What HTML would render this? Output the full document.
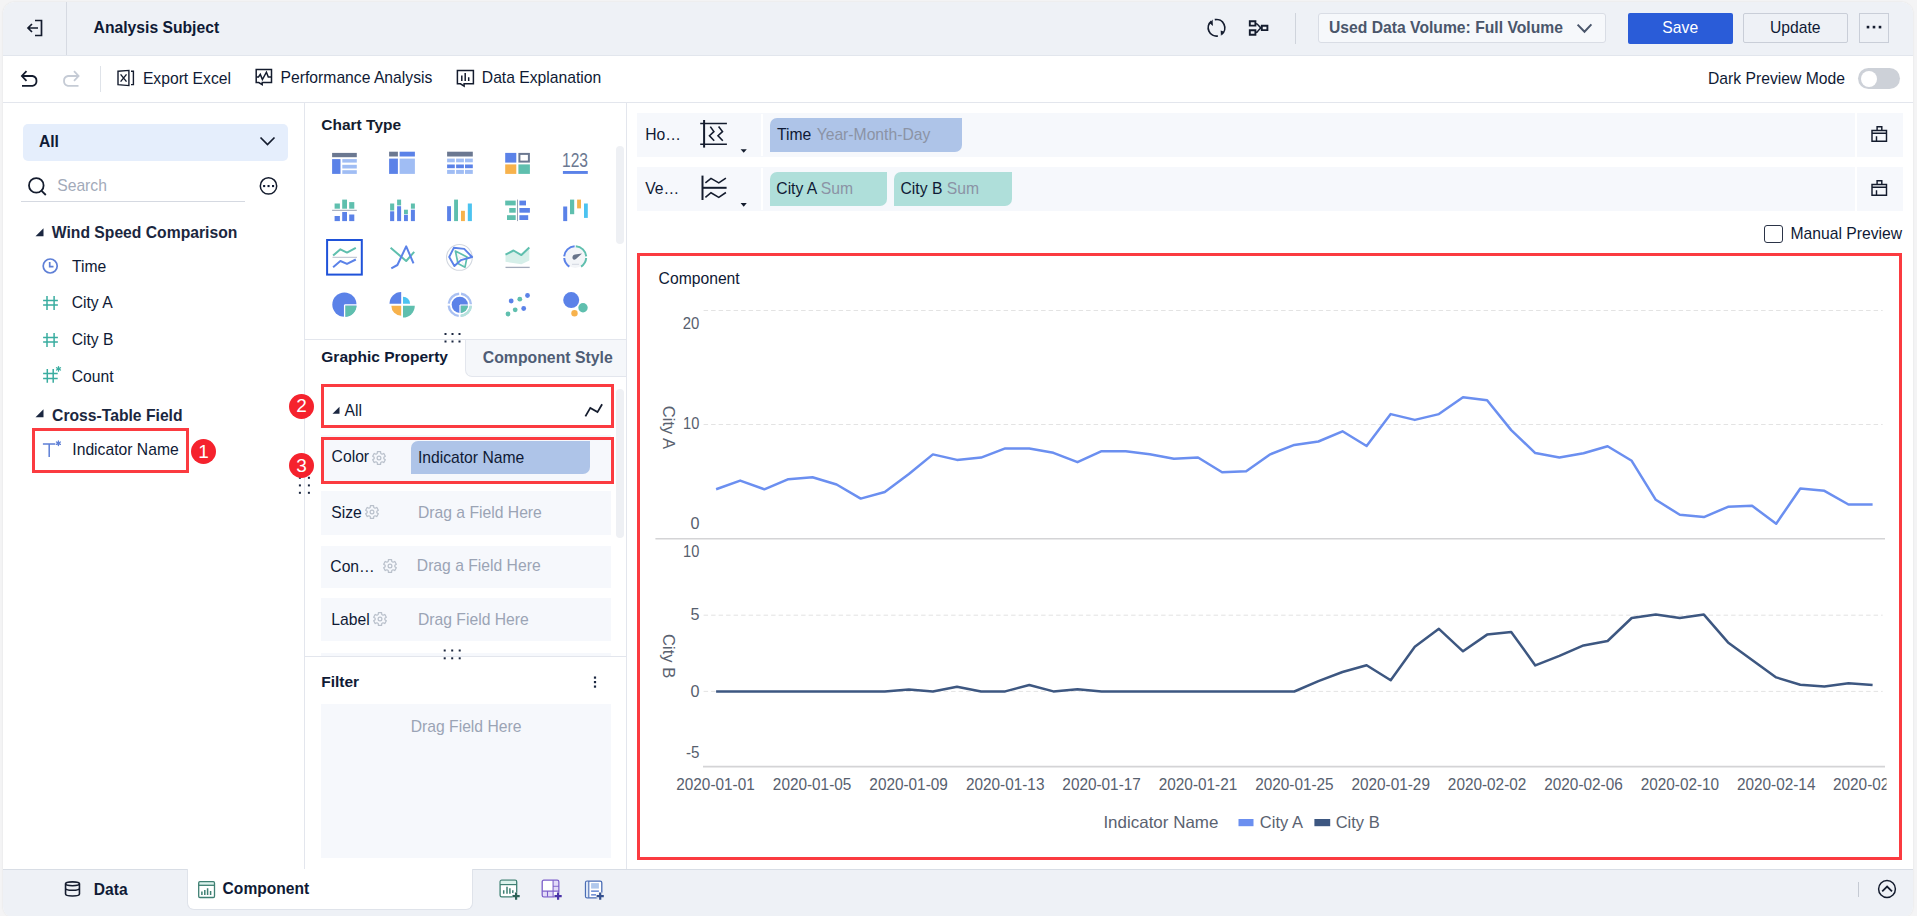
<!DOCTYPE html>
<html><head><meta charset="utf-8">
<style>
*{box-sizing:border-box;margin:0;padding:0}
html,body{width:1917px;height:916px;overflow:hidden;background:#f4f4f5;font-family:"Liberation Sans",sans-serif;color:#0f1a35;font-size:15.7px}
.a{position:absolute}
.t{position:absolute;white-space:nowrap;line-height:1}
.b{font-weight:700}
svg{position:absolute;overflow:visible}
.ic{fill:none;stroke:#141c2e}
</style></head><body>
<div class="a" style="left:2.5px;top:1.5px;width:1910.5px;height:916.5px;background:#fff;border-radius:12px;box-shadow:0 0 2px rgba(0,0,0,.10)"></div>
<!--HEADER-->
<div class="a" style="left:2.5px;top:1.5px;width:1910.5px;height:54px;background:#eef1f6;border-radius:12px 12px 0 0;border-bottom:1px solid #e2e6ed"></div>
<div class="a" style="left:66px;top:2px;width:1px;height:53px;background:#d6dae2"></div>
<svg style="left:0;top:0" width="60" height="60"><g class="ic" stroke-width="1.7"><path d="M35 20.5h6.5v15H35"/><path d="M38 28H28M32 24l-4 4 4 4"/></g></svg>
<div class="t b" style="left:93.6px;top:20.2px;font-size:15.7px">Analysis Subject</div>
<svg style="left:1200px;top:12px" width="100" height="34"><g class="ic" stroke-width="1.7"><path d="M14.77 7.68A8.3 8.3 0 0 1 21.61 22.34 M17.94 23.97A8.3 8.3 0 0 1 11.39 9.26"/>
<path d="M49.8 9.2h5.6v4.4h-5.6zM49.8 18.3h5.6v4.4h-5.6zM61.8 13.7h5.6v4.4h-5.6z" stroke-width="1.9"/><path d="M55.4 11.4c4 0 2.6 4.5 6.4 4.5M55.4 20.5c4 0 2.6-4.6 6.4-4.6" stroke-width="1.5"/></g>
<path d="M12.6 7.6l.3 6.3-3.2-2.6z" fill="#141c2e"/><path d="M20.7 18.4l.2 5.6 2.6-4.5z" fill="#141c2e"/></svg>
<div class="a" style="left:1295px;top:13px;width:1px;height:31px;background:#cfd4dc"></div>
<div class="a" style="left:1317.8px;top:13.3px;width:288.7px;height:30.2px;background:#f6f8fb;border:1px solid #d9dde5;border-radius:3px"></div>
<div class="t b" style="left:1329px;top:20.3px;font-size:15.7px;color:#4a566b">Used Data Volume: Full Volume</div>
<svg style="left:1570px;top:18px" width="30" height="20"><path class="ic" style="stroke:#4a566b" stroke-width="2" d="M7.6 6.6L14.5 13.7 21.4 6.4"/></svg>
<div class="a" style="left:1628px;top:13px;width:104.5px;height:30.6px;background:#2a5cd8;border-radius:2px"></div>
<div class="t" style="left:1628px;top:19.6px;width:104.5px;text-align:center;color:#fff;font-size:15.7px">Save</div>
<div class="a" style="left:1743px;top:13.3px;width:104.6px;height:30.2px;border:1px solid #c9ced8;border-radius:2px"></div>
<div class="t" style="left:1743px;top:19.6px;width:104.6px;text-align:center;font-size:15.7px">Update</div>
<div class="a" style="left:1859.3px;top:13.2px;width:29.4px;height:30.3px;border:1px solid #c9ced8"></div>
<svg style="left:1859px;top:13px" width="30" height="30"><g fill="#141c2e"><rect x="7.7" y="12.8" width="2.6" height="2.6"/><rect x="13.7" y="12.8" width="2.6" height="2.6"/><rect x="19.7" y="12.8" width="2.6" height="2.6"/></g></svg>
<!--TOOLBAR-->
<div class="a" style="left:2.5px;top:102px;width:1910.5px;height:1px;background:#e3e6ed"></div>
<svg style="left:0;top:60px" width="120" height="40"><g class="ic" stroke-width="1.8">
<path d="M22.5 16h10a5 5 0 0 1 0 9.8H22"/><path d="M26.5 11.2l-4.6 4.8 4.6 4.8"/></g>
<g class="ic" style="stroke:#c5cbd5" stroke-width="1.8"><path d="M78 16H68a5 5 0 0 0 0 9.8h10.5"/><path d="M74 11.2l4.6 4.8-4.6 4.8"/></g></svg>
<div class="a" style="left:99.5px;top:66px;width:1px;height:26px;background:#dfe3e9"></div>
<svg style="left:110px;top:60px" width="30" height="30"><g class="ic" stroke-width="1.4"><path d="M8 11.2L18.9 10.4V25.6L8 24.6z"/><path d="M21 11.2h2.4v13.4H21"/><path d="M10.6 14.4l5.9 7.2M16.5 14.4l-5.9 7.2"/></g></svg>
<div class="t" style="left:142.9px;top:70.7px">Export Excel</div>
<svg style="left:250px;top:60px" width="30" height="30"><g class="ic" stroke-width="1.5" stroke-linejoin="miter"><path d="M6.2 22.5V9.4H21.5V22.5H12.2V24.6L8.8 22.5z"/><path d="M6.5 16.9H8.5L10.3 14.4 12.4 19.5 16.4 12.2 18.3 17.1H21.3"/></g></svg>
<div class="t" style="left:280.6px;top:69.8px">Performance Analysis</div>
<svg style="left:450px;top:60px" width="30" height="30"><g class="ic" stroke-width="1.5" stroke-linejoin="miter"><path d="M7.4 23.8V10.4H23.4V23.8H14.1V26.2L10.5 23.8z"/><path d="M11.8 21V15.4M15.2 21V13.1M18.7 21V17.2"/></g></svg>
<div class="t" style="left:481.8px;top:70.4px">Data Explanation</div>
<div class="t" style="left:1708px;top:70.5px">Dark Preview Mode</div>
<div class="a" style="left:1858px;top:68px;width:42px;height:21px;background:#cdd1d8;border-radius:11px"></div>
<div class="a" style="left:1860.5px;top:70.5px;width:16px;height:16px;background:#fff;border-radius:50%"></div>
<!--LEFT PANEL-->
<div class="a" style="left:304px;top:103px;width:1px;height:766px;background:#e3e6ed"></div>
<div class="a" style="left:23.2px;top:124.1px;width:264.8px;height:36.6px;background:#e5eefc;border-radius:5px"></div>
<div class="t b" style="left:38.9px;top:133.6px;font-size:15.7px">All</div>
<svg style="left:250px;top:130px" width="30" height="20"><path class="ic" stroke-width="1.7" d="M10.5 7.5l7 7 7-7"/></svg>
<svg style="left:20px;top:170px" width="30" height="30"><g class="ic" stroke-width="1.8"><circle cx="16.3" cy="15.4" r="7.3"/><path d="M21.6 20.8l4.2 4.2"/></g></svg>
<div class="t" style="left:57.2px;top:178.3px;color:#a2aab9">Search</div>
<div class="a" style="left:21.2px;top:201px;width:223.6px;height:1px;background:#d5d9e1"></div>
<svg style="left:255px;top:173px" width="30" height="30"><g class="ic" stroke-width="1.5"><circle cx="13.5" cy="12.9" r="8.2"/></g><g fill="#0f1a35"><rect x="8.1" y="12" width="2.1" height="2.1"/><rect x="12.5" y="12" width="2.1" height="2.1"/><rect x="17" y="12" width="2.1" height="2.1"/></g></svg>
<svg style="left:30px;top:225px" width="20" height="15"><path d="M5.5 11.3l8-8v8z" fill="#1b2740"/></svg>
<div class="t b" style="left:51.8px;top:224.8px;font-size:15.7px;color:#1b2740">Wind Speed Comparison</div>
<svg style="left:40px;top:256px" width="22" height="22"><g class="ic" style="stroke:#5e7fd6" stroke-width="1.7"><circle cx="10.2" cy="10" r="7"/><path d="M9.7 6v4.6h3.8"/></g></svg>
<div class="t" style="left:71.9px;top:258.5px">Time</div>
<svg style="left:40px;top:290px" width="22" height="22"><g class="ic" style="stroke:#3aada0" stroke-width="1.5"><path d="M7 5.9v14.1M14.1 5.9v14.1M3.1 10.5h14.8M3.1 15h14.8"/></g></svg>
<div class="t" style="left:71.7px;top:294.8px">City A</div>
<svg style="left:40px;top:327px" width="22" height="22"><g class="ic" style="stroke:#3aada0" stroke-width="1.5"><path d="M7 5.9v14.1M14.1 5.9v14.1M3.1 10.5h14.8M3.1 15h14.8"/></g></svg>
<div class="t" style="left:71.7px;top:331.8px">City B</div>
<svg style="left:40px;top:364px" width="22" height="22"><g class="ic" style="stroke:#3aada0" stroke-width="1.5"><path d="M7.3 5v13.8M13.2 5v13.8M3.1 9.4h14.6M3.1 14.5h14.6"/></g><g stroke="#3aada0" stroke-width="1.3" stroke-linecap="round"><path d="M18.5 2.6000000000000005v4.6M16.5 3.7500000000000004l4 2.3M16.5 6.050000000000001l4-2.3"/></g></svg>
<div class="t" style="left:71.7px;top:368.5px">Count</div>
<svg style="left:30px;top:406px" width="20" height="15"><path d="M5.5 11.3l8-8v8z" fill="#1b2740"/></svg>
<div class="t b" style="left:52.1px;top:407.5px;font-size:15.7px;color:#1b2740">Cross-Table Field</div>
<div class="a" style="left:32.1px;top:428.1px;width:156.7px;height:44.6px;border:3px solid #fb3b40"></div>
<svg style="left:40px;top:438px" width="24" height="24"><g class="ic" style="stroke:#5e7fd6" stroke-width="1.5"><path d="M2.9 6h12.4M9.2 6v13"/></g><g stroke="#5e7fd6" stroke-width="1.3" stroke-linecap="round"><path d="M18.4 2.9000000000000004v4.6M16.4 4.050000000000001l4 2.3M16.4 6.35l4-2.3"/></g></svg>
<div class="t" style="left:72.3px;top:442.2px">Indicator Name</div>
<div class="a" style="left:190.9px;top:438.8px;width:25.2px;height:25.2px;background:#f5222d;border-radius:50%"></div>
<div class="t" style="left:190.9px;top:441.5px;width:25.2px;text-align:center;color:#fff;font-size:19px">1</div>
<!--MIDDLE PANEL-->
<div class="a" style="left:626px;top:103px;width:1px;height:766px;background:#e3e6ed"></div>
<div class="t b" style="left:321.3px;top:117.4px;font-size:15.5px;color:#141c2e">Chart Type</div>
<div class="a" style="left:615.5px;top:146px;width:8.4px;height:98px;background:#eef0f4;border-radius:4px"></div>
<svg style="left:0;top:0" width="627" height="330">
<!--row1-->
<g>
<rect x="332.1" y="152.9" width="24.7" height="4.3" fill="#6b7891"/>
<rect x="332.1" y="159.1" width="8.4" height="14.8" fill="#5b82e8"/>
<rect x="342.3" y="159.1" width="14.5" height="3.5" fill="#a0bdf4"/><rect x="342.3" y="164.8" width="14.5" height="3.7" fill="#a0bdf4"/><rect x="342.3" y="170.2" width="14.5" height="3.7" fill="#a0bdf4"/>
</g>
<g>
<rect x="389.1" y="151.7" width="8.8" height="4.8" fill="#6b7891"/><rect x="399.6" y="151.7" width="15.3" height="4.8" fill="#5b82e8"/>
<rect x="389.1" y="158.6" width="8.8" height="15.3" fill="#5b82e8"/><rect x="399.6" y="158.6" width="15.3" height="15.3" fill="#a0bdf4"/>
</g>
<g>
<rect x="447.1" y="151.7" width="25.7" height="4.8" fill="#6b7891"/>
<g fill="#a0bdf4"><rect x="447.1" y="158.6" width="7.7" height="3.7"/><rect x="456.1" y="158.6" width="7.8" height="3.7"/><rect x="465" y="158.6" width="7.8" height="3.7"/>
<rect x="447.1" y="169.9" width="7.7" height="4"/><rect x="456.1" y="169.9" width="7.8" height="4"/><rect x="465" y="169.9" width="7.8" height="4"/></g>
<g fill="#5b82e8"><rect x="447.1" y="164.5" width="7.7" height="3.7"/><rect x="456.1" y="164.5" width="7.8" height="3.7"/><rect x="465" y="164.5" width="7.8" height="3.7"/></g>
</g>
<g>
<rect x="505.2" y="152.9" width="11.1" height="9.7" fill="#5b82e8"/>
<rect x="519.4" y="153.9" width="9.5" height="7.7" fill="none" stroke="#6b7891" stroke-width="2"/>
<rect x="505.2" y="164.4" width="11.1" height="9.5" fill="#f7b24c"/><rect x="518.4" y="164.4" width="11.5" height="9.5" fill="#5fbfae"/>
</g>
<g>
<text x="562" y="167" font-size="19.5" fill="#6b7891" font-family="Liberation Sans" textLength="26" lengthAdjust="spacingAndGlyphs">123</text>
<rect x="562.9" y="171" width="24.9" height="2.9" fill="#5b82e8"/>
</g>
<!--row2-->
<g>
<rect x="332.1" y="209.8" width="24.7" height="1" fill="#9aa3b3"/>
<g fill="#5fbfae"><rect x="334.6" y="203.5" width="5.3" height="5.2"/><rect x="342.2" y="199.6" width="4.8" height="9.1"/><rect x="349.2" y="202.1" width="5.1" height="6.6"/></g>
<g fill="#5b82e8"><rect x="334.6" y="216" width="5.3" height="5.1"/><rect x="342.2" y="212" width="4.8" height="9.1"/><rect x="349.2" y="214.5" width="5.1" height="6.6"/></g>
</g>
<g>
<g fill="#5fbfae"><rect x="390.1" y="203.5" width="4.1" height="7"/><rect x="397.1" y="199.6" width="4" height="5.8"/><rect x="404" y="209.7" width="3.9" height="4.5"/><rect x="410.9" y="203.5" width="4" height="5.2"/></g>
<g fill="#5b82e8"><rect x="390.1" y="211.3" width="4.1" height="9.8"/><rect x="397.1" y="206.2" width="4" height="14.9"/><rect x="404" y="214.8" width="3.9" height="6.3"/><rect x="410.9" y="209.7" width="4" height="11.4"/></g>
</g>
<g>
<rect x="447.1" y="206.2" width="3.9" height="14.9" fill="#5b82e8"/><rect x="454.1" y="199.6" width="3.9" height="21.5" fill="#5fbfae"/><rect x="461" y="210.8" width="3.9" height="10.3" fill="#f7b24c"/><rect x="467.8" y="203.5" width="4.1" height="17.6" fill="#4cc3f0"/>
</g>
<g>
<rect x="517" y="199.6" width="1" height="21.5" fill="#9aa3b3"/>
<g fill="#5fbfae"><rect x="505.2" y="200.6" width="10.5" height="4.8"/><rect x="509.2" y="208" width="6.5" height="4.7"/><rect x="507" y="215.2" width="8.7" height="4.8"/></g>
<g fill="#5b82e8"><rect x="519.4" y="200.6" width="6.6" height="4.8"/><rect x="519.4" y="208" width="10.5" height="4.7"/><rect x="519.4" y="215.2" width="8.8" height="4.8"/></g>
</g>
<g>
<rect x="563.2" y="206.5" width="4" height="14.6" fill="#5b82e8"/><rect x="570" y="199.6" width="4.2" height="14.6" fill="#5fbfae"/><rect x="577.1" y="199.6" width="3.9" height="8.8" fill="#f7b24c"/><rect x="584" y="203.5" width="3.8" height="14.4" fill="#4cc3f0"/>
</g>
<!--row3-->
<rect x="327.1" y="240" width="34.7" height="34.6" fill="none" stroke="#1f52d9" stroke-width="2"/>
<g fill="none" stroke-width="2" stroke-linejoin="round">
<polyline points="333.1,255.6 340.4,249.3 347,252.6 355.8,247.8" stroke="#5fbfae"/>
<path d="M332.5 257.3h24.5" stroke="#b8bfcc" stroke-width="1"/>
<polyline points="333.1,267.2 340.4,261 347,263.9 355.8,259.5" stroke="#5b82e8"/>
<polyline points="390.6,247.8 406.2,261 414.2,251.9" stroke="#5fbfae"/>
<polyline points="391.3,268.3 397.4,265 406.2,246.4 413.5,263.3" stroke="#5b82e8"/>
<circle cx="459.4" cy="257.4" r="12.9" stroke="#d3d8e0" stroke-width="1.1"/>
<path d="M459.4 257.4L453.8 247.8M459.4 257.4L472 257M459.4 257.4L454.4 266M459.4 257.4L465 267" stroke="#e6e9ee" stroke-width=".8"/>
<polygon points="455.4,251 467,257 465,267.2 458,263.5" stroke="#5fbfae" stroke-width="1.7"/>
<polygon points="453.8,247.8 464.2,248.9 472.1,257 460.9,260.1 454.4,266 449.2,257" stroke="#5b82e8" stroke-width="1.9"/>
<path d="M505.5 254.7L513.5 250.5 521.4 255.1 529.3 247.6V260.5L521.4 264.3 505.5 261.8z" fill="#d6efe9" stroke="none"/>
<polyline points="505.5,254.7 513.5,250.5 521.4,255.1 529.3,247.6" stroke="#5fbfae"/>
<path d="M505.5 267.4h24.2" stroke="#a3abba" stroke-width="1.3"/>
<circle cx="575.2" cy="257.4" r="10.5" fill="#f3f5f8" stroke="none"/>
<path d="M569.37 266.53A11.0 11.0 0 0 1 564.23 257.97 M564.23 256.43A11.0 11.0 0 0 1 574.62 246.22" stroke="#5b82e8" stroke-width="2"/>
<path d="M575.78 246.22A11.0 11.0 0 0 1 586.17 256.43 M586.17 257.97A11.0 11.0 0 0 1 581.03 266.53" stroke="#5fbfae" stroke-width="2"/>
<path d="M572 264.3h7" stroke="#d3d8e0" stroke-width="1"/>
</g>
<path d="M573.5 259.5C571.5 258 572.5 254.8 575 254.5L582 253.5 576.5 258.5C575.8 259.5 574.5 260 573.5 259.5z" fill="#67748a"/>
<!--row4-->
<circle cx="344.4" cy="304.6" r="12.1" fill="#5b82e8"/>
<path d="M345.2 305.4h11.3A11.3 11.3 0 0 1 345.2 316.7z" fill="#5fbfae"/>
<path d="M344.6 304.8h12.6M344.6 304.8v12.6" stroke="#fff" stroke-width="1.3"/>
<path d="M401.2 303.8V292.1A11.7 11.7 0 0 0 389.5 303.8z" fill="#5b82e8"/>
<path d="M403 303.8V296.7A7.1 7.1 0 0 1 410.1 303.8z" fill="#4cc3f0"/>
<path d="M401.2 305.8H391.3A9.9 9.9 0 0 0 401.2 315.7z" fill="#f7b24c"/>
<path d="M403 305.8H414.8A11.8 11.8 0 0 1 403 317.6z" fill="#5fbfae"/>
<circle cx="459.8" cy="304.8" r="11.1" fill="none" stroke="#a9c0f2" stroke-width="2.4" stroke-dasharray="15.43 2" stroke-dashoffset="-1"/>
<path d="M470.9 305.8A11.1 11.1 0 0 1 460.8 315.9" fill="none" stroke="#b5e3da" stroke-width="2.4"/>
<circle cx="459.8" cy="304.8" r="8.1" fill="#5b82e8"/>
<path d="M460.6 305.6h7.3A7.3 7.3 0 0 1 460.6 312.9z" fill="#5fbfae"/>
<path d="M460 305h8.5M460 305v8.5" stroke="#fff" stroke-width="1.2"/>
<g fill="#5b82e8"><circle cx="511.2" cy="301" r="2.4"/><circle cx="527.5" cy="295.5" r="2.4"/><circle cx="523.7" cy="308.5" r="2.4"/></g>
<g fill="#5fbfae"><circle cx="519.8" cy="299.2" r="2.4"/><circle cx="515.2" cy="309.8" r="2.4"/><circle cx="508" cy="314" r="2.4"/></g>
<circle cx="571.2" cy="300.1" r="8" fill="#5b82e8"/><circle cx="583" cy="307.7" r="4.7" fill="#5fbfae"/><circle cx="574.5" cy="313.3" r="3.2" fill="#f7b24c"/>
<!--drag dots-->
<g fill="#1b2740"><rect x="444.5" y="333" width="2" height="2"/><rect x="451.5" y="333" width="2" height="2"/><rect x="458.5" y="333" width="2" height="2"/><rect x="444.5" y="340.5" width="2" height="2"/><rect x="451.5" y="340.5" width="2" height="2"/><rect x="458.5" y="340.5" width="2" height="2"/></g>
</svg>
<div class="a" style="left:305px;top:339px;width:321px;height:1px;background:#e3e6ed"></div>
<!--GRAPHIC PROPERTY-->
<div class="a" style="left:465.3px;top:340px;width:160.7px;height:36.7px;background:#f5f7fa;border-left:1px solid #e3e6ed;border-bottom:1px solid #e3e6ed;border-radius:0 0 0 7px"></div>
<div class="t b" style="left:321.3px;top:349.1px;font-size:15.5px">Graphic Property</div>
<div class="t b" style="left:482.8px;top:350.1px;font-size:15.8px;color:#4f5d75">Component Style</div>
<div class="a" style="left:615.5px;top:389px;width:8.4px;height:149.3px;background:#eef0f4;border-radius:4px"></div>
<div class="a" style="left:320.9px;top:383.9px;width:292.9px;height:43.8px;border:3px solid #fb3b40"></div>
<svg style="left:330px;top:402px" width="15" height="15"><path d="M2.5 11.7l7-7v7z" fill="#1b2740"/></svg>
<div class="t" style="left:344.5px;top:402.6px">All</div>
<svg style="left:580px;top:400px" width="26" height="20"><path class="ic" stroke-width="1.8" d="M5.4 16.4L10.3 7.9 17.5 12.1 22.1 4.3"/></svg>
<div class="a" style="left:320.7px;top:435px;width:290.3px;height:46px;background:#f6f8fc"></div>
<div class="a" style="left:320.9px;top:437.3px;width:292.9px;height:46.4px;border:3px solid #fb3b40"></div>
<div class="t" style="left:331.6px;top:449.1px">Color</div>
<svg style="left:370px;top:449px" width="18" height="18" class="gear"><g fill="none" stroke="#b9c0cb" stroke-width="1.2" stroke-linejoin="round"><path d="M7.40 2.60 L10.60 2.60 L10.76 4.43 L12.08 5.19 L13.75 4.42 L15.34 7.18 L13.84 8.23 L13.84 9.77 L15.34 10.82 L13.75 13.58 L12.08 12.81 L10.76 13.57 L10.60 15.40 L7.40 15.40 L7.24 13.57 L5.92 12.81 L4.25 13.58 L2.66 10.82 L4.16 9.77 L4.16 8.23 L2.66 7.18 L4.25 4.42 L5.92 5.19 L7.24 4.43z"/><circle cx="9" cy="9" r="1.9"/></g></svg>
<div class="a" style="left:411px;top:441.2px;width:178.9px;height:32.5px;background:#aec4e8;border-radius:7px 0 7px 0"></div>
<div class="t" style="left:417.9px;top:449.6px">Indicator Name</div>
<!--size/con/label rows-->
<div class="a" style="left:320.7px;top:490.8px;width:290.3px;height:43.9px;background:#f6f8fc"></div>
<div class="t" style="left:331.3px;top:504.8px">Size</div>
<svg style="left:363px;top:503px" width="18" height="18"><g fill="none" stroke="#b9c0cb" stroke-width="1.2" stroke-linejoin="round"><path d="M7.40 2.60 L10.60 2.60 L10.76 4.43 L12.08 5.19 L13.75 4.42 L15.34 7.18 L13.84 8.23 L13.84 9.77 L15.34 10.82 L13.75 13.58 L12.08 12.81 L10.76 13.57 L10.60 15.40 L7.40 15.40 L7.24 13.57 L5.92 12.81 L4.25 13.58 L2.66 10.82 L4.16 9.77 L4.16 8.23 L2.66 7.18 L4.25 4.42 L5.92 5.19 L7.24 4.43z"/><circle cx="9" cy="9" r="1.9"/></g></svg>
<div class="t" style="left:418px;top:505px;color:#9ba4b5">Drag a Field Here</div>
<div class="a" style="left:320.7px;top:546px;width:290.3px;height:41.6px;background:#f6f8fc"></div>
<div class="t" style="left:330.3px;top:558.6px">Con…</div>
<svg style="left:381px;top:557px" width="18" height="18"><g fill="none" stroke="#b9c0cb" stroke-width="1.2" stroke-linejoin="round"><path d="M7.40 2.60 L10.60 2.60 L10.76 4.43 L12.08 5.19 L13.75 4.42 L15.34 7.18 L13.84 8.23 L13.84 9.77 L15.34 10.82 L13.75 13.58 L12.08 12.81 L10.76 13.57 L10.60 15.40 L7.40 15.40 L7.24 13.57 L5.92 12.81 L4.25 13.58 L2.66 10.82 L4.16 9.77 L4.16 8.23 L2.66 7.18 L4.25 4.42 L5.92 5.19 L7.24 4.43z"/><circle cx="9" cy="9" r="1.9"/></g></svg>
<div class="t" style="left:416.8px;top:558px;color:#9ba4b5">Drag a Field Here</div>
<div class="a" style="left:320.7px;top:598.1px;width:290.3px;height:43.2px;background:#f6f8fc"></div>
<div class="t" style="left:331.3px;top:611.6px">Label</div>
<svg style="left:371px;top:610px" width="18" height="18"><g fill="none" stroke="#b9c0cb" stroke-width="1.2" stroke-linejoin="round"><path d="M7.40 2.60 L10.60 2.60 L10.76 4.43 L12.08 5.19 L13.75 4.42 L15.34 7.18 L13.84 8.23 L13.84 9.77 L15.34 10.82 L13.75 13.58 L12.08 12.81 L10.76 13.57 L10.60 15.40 L7.40 15.40 L7.24 13.57 L5.92 12.81 L4.25 13.58 L2.66 10.82 L4.16 9.77 L4.16 8.23 L2.66 7.18 L4.25 4.42 L5.92 5.19 L7.24 4.43z"/><circle cx="9" cy="9" r="1.9"/></g></svg>
<div class="t" style="left:418px;top:611.6px;color:#9ba4b5">Drag Field Here</div>
<div class="a" style="left:320.7px;top:652.9px;width:290.3px;height:3.6px;background:#f6f8fc"></div>
<div class="a" style="left:305px;top:656px;width:321px;height:1px;background:#e3e6ed"></div>
<svg style="left:0;top:0" width="627" height="700"><g fill="#1b2740">
<rect x="443.7" y="649.5" width="2" height="2"/><rect x="451.2" y="649.5" width="2" height="2"/><rect x="458.7" y="649.5" width="2" height="2"/>
<rect x="443.7" y="657.3" width="2" height="2"/><rect x="451.2" y="657.3" width="2" height="2"/><rect x="458.7" y="657.3" width="2" height="2"/>
<rect x="298.9" y="476.8" width="2" height="2"/><rect x="307.9" y="476.8" width="2" height="2"/><rect x="298.9" y="484.4" width="2" height="2"/><rect x="307.9" y="484.4" width="2" height="2"/><rect x="298.9" y="491.8" width="2" height="2"/><rect x="307.9" y="491.8" width="2" height="2"/>
<rect x="593.9" y="676.5" width="2.2" height="2.2"/><rect x="593.9" y="681" width="2.2" height="2.2"/><rect x="593.9" y="685.5" width="2.2" height="2.2"/>
</g></svg>
<!--FILTER-->
<div class="t b" style="left:321.2px;top:673.7px;font-size:15.5px">Filter</div>
<div class="a" style="left:321.2px;top:704.1px;width:289.8px;height:153.6px;background:#f6f8fc"></div>
<div class="t" style="left:321.2px;top:719.3px;width:289.8px;text-align:center;color:#9ba4b5">Drag Field Here</div>
<!--badges 2,3-->
<div class="a" style="left:288.8px;top:393.6px;width:25.4px;height:25.4px;background:#f5222d;border-radius:50%"></div>
<div class="t" style="left:288.8px;top:396.2px;width:25.4px;text-align:center;color:#fff;font-size:19px">2</div>
<div class="a" style="left:288.8px;top:453px;width:25.4px;height:25.4px;background:#f5222d;border-radius:50%"></div>
<div class="t" style="left:288.8px;top:455.6px;width:25.4px;text-align:center;color:#fff;font-size:19px">3</div>
<!--RIGHT TOP FIELD ROWS-->
<div class="a" style="left:637px;top:113px;width:1217.8px;height:44px;background:#f6f8fc"></div>
<div class="a" style="left:761px;top:114.4px;width:2px;height:41.2px;background:#fff"></div>
<div class="a" style="left:1857.2px;top:113px;width:45.6px;height:44px;background:#f6f8fc"></div>
<div class="a" style="left:637px;top:167.1px;width:1217.8px;height:43.7px;background:#f6f8fc"></div>
<div class="a" style="left:761px;top:168.4px;width:2px;height:41.2px;background:#fff"></div>
<div class="a" style="left:1857.2px;top:167.1px;width:45.6px;height:43.7px;background:#f6f8fc"></div>
<div class="t" style="left:645.2px;top:126.6px">Ho…</div>
<div class="t" style="left:645.2px;top:181.1px">Ve…</div>
<svg style="left:690px;top:110px" width="70" height="110"><g class="ic" stroke-width="1.6" stroke-linejoin="miter">
<path d="M14.1 10v27.6" stroke-width="2"/><path d="M10.2 13.5h26.7M10.2 34.3h26.7"/>
<path d="M20.3 16.6l3.6 5-4.4 4.1 4.7 5M28.6 16.6l3.9 5-4.5 4.1 4.8 5"/>
<path d="M12.5 65.6V90" stroke-width="2"/><path d="M12.5 77.8h24.1" stroke-width="2"/>
<path d="M15.4 72.9l5.6-4.5 7.8 4.5 7.1-4.7M15.4 87.4l5.6-4.7 7.8 4.7 7.1-4.9"/></g>
<path d="M50.6 39.2h6.2l-3.1 3.6z M50.6 93.1h6.2l-3.1 3.6z" fill="#141c2e"/></svg>
<div class="a" style="left:769.9px;top:117.9px;width:192.2px;height:33.9px;background:#aec4e8;border-radius:7px 0 7px 0"></div>
<div class="t" style="left:777px;top:127.3px">Time <span style="color:#8b93a5;margin-left:1px">Year-Month-Day</span></div>
<div class="a" style="left:769.9px;top:172px;width:116.9px;height:33.9px;background:#afdfda;border-radius:7px 0 7px 0"></div>
<div class="t" style="left:776.3px;top:181.1px">City A <span style="color:#8b93a5">Sum</span></div>
<div class="a" style="left:894px;top:172px;width:118px;height:33.9px;background:#afdfda;border-radius:7px 0 7px 0"></div>
<div class="t" style="left:900.5px;top:181.1px">City B <span style="color:#8b93a5">Sum</span></div>
<svg style="left:1860px;top:115px" width="40" height="100"><g class="ic" stroke-width="1.45">
<path d="M12 15.5H26.5V26.3H12zM17.1 15.5V11.8H21.8V15.5M12 18.2H26.5M16.5 21.3V26.3"/>
<path d="M12 69.5H26.5V80.3H12zM17.1 69.5V65.8H21.8V69.5M12 72.2H26.5M16.5 75.3V80.3"/></g></svg>
<!--manual preview-->
<div class="a" style="left:1764px;top:225px;width:19px;height:18px;border:1.5px solid #2b3448;border-radius:3px"></div>
<div class="t" style="left:1790.5px;top:225.7px">Manual Preview</div>
<!--CHART BOX-->
<div class="a" style="left:637.3px;top:253.3px;width:1264.5px;height:606.6px;border:3px solid #fb3b40"></div>
<div class="t" style="left:658.6px;top:270.9px">Component</div>
<svg style="left:0;top:0" width="1917" height="916">
<g stroke="#e3e3e3" stroke-width="1" stroke-dasharray="4.5 3">
<path d="M703.6 310.5H1882.7M703.6 424.5H1882.7M703.6 615.2H1882.7M703.6 691.4H1882.7"/>
</g>
<path d="M655.4 538.7H1885M703 766.6H1885" stroke="#d4d4d6" stroke-width="1.6"/>
<g font-family="Liberation Sans" font-size="16.2" fill="#57606e" text-anchor="end">
<text x="699.4" y="328.6" textLength="16.6" lengthAdjust="spacingAndGlyphs">20</text><text x="699.4" y="429.3" textLength="16.3" lengthAdjust="spacingAndGlyphs">10</text><text x="699.4" y="529.2">0</text>
<text x="699.4" y="557.4" textLength="16.3" lengthAdjust="spacingAndGlyphs">10</text><text x="699.4" y="619.8">5</text><text x="699.4" y="696.9">0</text><text x="699.4" y="757.5" textLength="13.5" lengthAdjust="spacingAndGlyphs">-5</text>
</g>
<g font-family="Liberation Sans" font-size="15" fill="#5a6270">
<text transform="translate(662.7,405.8) rotate(90)" font-size="16.6">City A</text>
<text transform="translate(662.7,634) rotate(90)" font-size="16.6">City B</text>
</g>
<polyline fill="none" stroke="#6b8ff0" stroke-width="2.5" stroke-linejoin="round" points="716.1,489.3 740.2,480.6 764.3,489.3 788.4,479.2 812.5,477.3 836.6,484.5 860.7,498.6 884.8,492 908.9,474 932.9,454.4 957.0,459.9 981.1,457.6 1005.2,448.4 1029.3,448.4 1053.4,452.8 1077.5,462.2 1101.6,451.2 1125.7,451.2 1149.8,454.3 1173.9,458.7 1198.0,457.5 1222.1,472.3 1246.2,471.2 1270.3,454.3 1294.3,444.9 1318.4,441.5 1342.5,431.3 1366.6,446 1390.7,414.1 1414.8,419.9 1438.9,414.1 1463.0,397.2 1487.1,400.3 1511.2,430.1 1535.3,453.1 1559.4,457.6 1583.5,453.2 1607.6,446.3 1631.7,460.8 1655.8,499.8 1679.8,514.8 1703.9,517.1 1728.0,506.8 1752.1,505.8 1776.2,523.7 1800.3,488.5 1824.4,490.8 1848.5,504.5 1872.6,504.5"/>
<polyline fill="none" stroke="#3d5781" stroke-width="2.5" stroke-linejoin="round" points="716.1,691.4 740.2,691.4 764.3,691.4 788.4,691.4 812.5,691.4 836.6,691.4 860.7,691.4 884.8,691.4 908.9,689.5 932.9,691.4 957.0,686.7 981.1,691.4 1005.2,691.4 1029.3,685 1053.4,691.4 1077.5,689.2 1101.6,691.5 1125.7,691.5 1149.8,691.5 1173.9,691.5 1198.0,691.5 1222.1,691.5 1246.2,691.5 1270.3,691.5 1294.3,691.5 1318.4,681.2 1342.5,672 1366.6,665.2 1390.7,680.3 1414.8,646.8 1438.9,628.8 1463.0,651.3 1487.1,634.6 1511.2,631.9 1535.3,665.4 1559.4,655.9 1583.5,645.4 1607.6,641 1631.7,618 1655.8,614.6 1679.8,618 1703.9,614.6 1728.0,642.4 1752.1,659.9 1776.2,677.4 1800.3,684.7 1824.4,686.5 1848.5,683.3 1872.6,685"/>
<g font-family="Liberation Sans" font-size="16.3" fill="#57606e" text-anchor="middle">
<text x="715.5" y="789.6" textLength="78.5" lengthAdjust="spacingAndGlyphs">2020-01-01</text><text x="812.1" y="789.6" textLength="78.5" lengthAdjust="spacingAndGlyphs">2020-01-05</text><text x="908.6" y="789.6" textLength="78.5" lengthAdjust="spacingAndGlyphs">2020-01-09</text><text x="1005.2" y="789.6" textLength="78.5" lengthAdjust="spacingAndGlyphs">2020-01-13</text>
<text x="1101.6" y="789.6" textLength="78.5" lengthAdjust="spacingAndGlyphs">2020-01-17</text><text x="1198" y="789.6" textLength="78.5" lengthAdjust="spacingAndGlyphs">2020-01-21</text><text x="1294.4" y="789.6" textLength="78.5" lengthAdjust="spacingAndGlyphs">2020-01-25</text><text x="1390.7" y="789.6" textLength="78.5" lengthAdjust="spacingAndGlyphs">2020-01-29</text>
<text x="1487.1" y="789.6" textLength="78.5" lengthAdjust="spacingAndGlyphs">2020-02-02</text><text x="1583.5" y="789.6" textLength="78.5" lengthAdjust="spacingAndGlyphs">2020-02-06</text><text x="1679.9" y="789.6" textLength="78.5" lengthAdjust="spacingAndGlyphs">2020-02-10</text><text x="1776.2" y="789.6" textLength="78.5" lengthAdjust="spacingAndGlyphs">2020-02-14</text>
</g>
<clipPath id="cl"><rect x="1820" y="770" width="66.5" height="30"/></clipPath>
<text clip-path="url(#cl)" x="1833" y="789.6" font-family="Liberation Sans" font-size="16.3" fill="#57606e" textLength="78.5" lengthAdjust="spacingAndGlyphs">2020-02-18</text>
<g font-family="Liberation Sans" font-size="16.5" fill="#5a6270">
<text x="1103.4" y="827.5" textLength="115" lengthAdjust="spacingAndGlyphs">Indicator Name</text><text x="1259.8" y="827.5">City A</text><text x="1335.7" y="827.5">City B</text>
</g>
<rect x="1238.5" y="819" width="15" height="7.2" fill="#6b8ff0"/><rect x="1314.4" y="819" width="15.8" height="7.2" fill="#3d5781"/>
</svg>
<!--BOTTOM BAR-->
<div class="a" style="left:2.5px;top:869px;width:1910.5px;height:49px;background:#eef1f6;border-top:1px solid #d8dde5;border-radius:0 0 12px 12px"></div>
<div class="a" style="left:187px;top:868.5px;width:285.6px;height:41.7px;background:#fff;border:1px solid #dfe3ea;border-top:none;border-radius:0 0 7px 7px"></div>
<svg style="left:60px;top:876px" width="30" height="26"><g class="ic" stroke-width="1.6"><ellipse cx="12.5" cy="7.85" rx="6.95" ry="1.95"/><path d="M5.55 7.85V18c0 1.1 3.1 2 6.95 2s6.95-.9 6.95-2V7.85M5.55 12.3c0 1.1 3.1 2 6.95 2s6.95-.9 6.95-2"/></g></svg>
<div class="t b" style="left:93.8px;top:881.9px;font-size:15.6px">Data</div>
<svg style="left:195px;top:878px" width="24" height="24"><rect x="4" y="3.8" width="15.2" height="3.4" fill="#dcf2ec"/><g fill="none" stroke="#3f8073" stroke-width="1.3"><rect x="3.7" y="3.7" width="15.8" height="15.8" rx="1.2"/><path d="M3.7 7.3h15.8"/></g><path d="M6.9 17v-3.5M9.8 17v-5M12.6 17v-6.8M15.6 17v-4" stroke="#3f8073" stroke-width="1.5"/></svg>
<div class="t b" style="left:222.6px;top:880.7px;font-size:15.6px">Component</div>
<svg style="left:495px;top:875px" width="120" height="30">
<rect x="5.1" y="5.2" width="16.6" height="16.6" rx="1.6" fill="#fff" stroke="#3f8073" stroke-width="1.3"/>
<rect x="5.8" y="5.9" width="15.2" height="3.6" fill="#dcf2ec"/><path d="M5.1 9.6h16.6" stroke="#3f8073" stroke-width="1.2"/>
<path d="M8.7 15.3v3.5M12 11.7v7.1M14.9 13.3v5.5M17.8 15.3v2.6" stroke="#3f8073" stroke-width="1.5"/>
<rect x="47.2" y="5.2" width="16.6" height="16.6" rx="1.6" fill="#fff" stroke="#7b5dc9" stroke-width="1.3"/>
<g fill="#e2dbf8"><rect x="58.6" y="6.1" width="4.5" height="4.6"/><rect x="58.6" y="11.7" width="4.5" height="3.9"/><rect x="48.1" y="16.6" width="4" height="4.5"/><rect x="53" y="16.6" width="4.6" height="4.5"/></g>
<path d="M58.1 5.2v16.6M47.2 16.1h16.6M52.5 16.1v5.7M58.1 11.2h5.7" stroke="#7b5dc9" stroke-width="1.1"/>
<rect x="90.5" y="6.1" width="16.3" height="16.7" rx="1.6" fill="#fff" stroke="#4a6db5" stroke-width="1.3"/>
<rect x="91.1" y="6.8" width="2.7" height="15.3" fill="#dbe6f6"/><path d="M93.8 6.1v16.7" stroke="#4a6db5" stroke-width="1.1"/>
<rect x="96.1" y="8.1" width="7.8" height="5.5" fill="#b0c8ec"/>
<path d="M96.1 16.2h7.8M96.1 19.8h5" stroke="#4a72c8" stroke-width="1.2"/>
<g stroke="#eef1f6" stroke-width="5" fill="none"><path d="M21.1 17.5v7.2M17.5 21.1h7.2M63.1 17.5v7.2M59.5 21.1h7.2M105.2 17.5v7.2M101.6 21.1h7.2"/></g>
<path d="M21.1 17.5v7.2M17.5 21.1h7.2" stroke="#2c6156" stroke-width="2.2"/>
<path d="M63.1 17.5v7.2M59.5 21.1h7.2" stroke="#4a33a8" stroke-width="2.2"/>
<path d="M105.2 17.5v7.2M101.6 21.1h7.2" stroke="#34508f" stroke-width="2.2"/>
</svg>
<div class="a" style="left:1858.4px;top:882.2px;width:1px;height:14.6px;background:#c5cad3"></div>
<svg style="left:1870px;top:872px" width="34" height="34"><g class="ic" stroke-width="1.5"><circle cx="17" cy="17" r="8.4"/><path d="M12.2 19.4L17.1 14.6 22 19.4" stroke-width="1.8"/></g></svg>
</body></html>
